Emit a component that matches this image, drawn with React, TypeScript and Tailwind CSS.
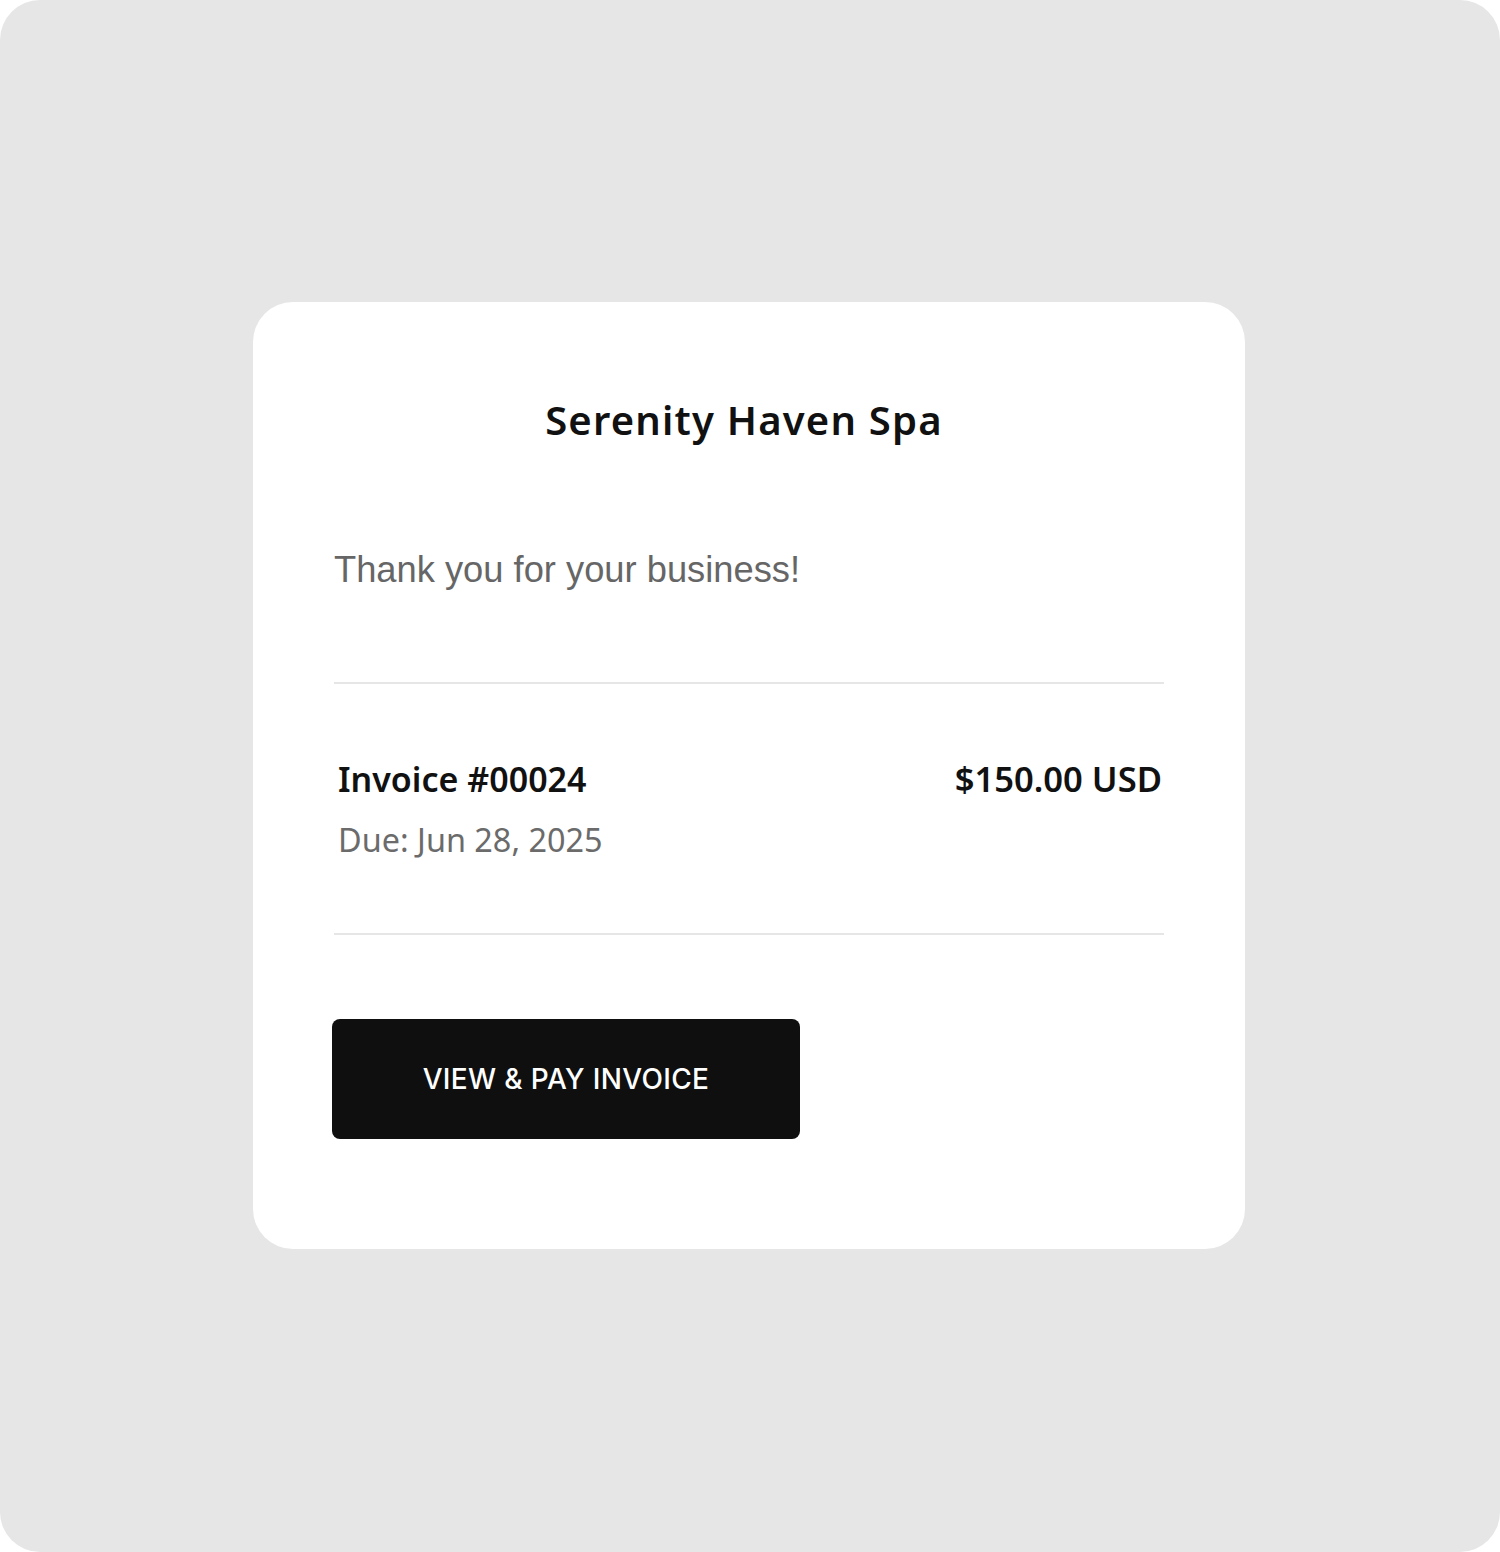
import React from "react";

export default function App() {
  return (
    <div className="w-[1500px] h-[1552px] bg-white">
      <div className="w-full h-full rounded-[40px] bg-[#e6e6e6] flex items-center justify-center pr-[2px] pb-[2px]">
        <div className="w-[992px] rounded-[40px] bg-white px-[81px] pt-[94px] pb-[110px] flex flex-col">
          <h1 className="text-center text-[40px] leading-[48px] font-semibold text-[#111111] tracking-[1.2px] pr-[10px] font-['Noto_Sans',sans-serif]">
            Serenity Haven Spa
          </h1>
          <p className="mt-[104px] text-[36.3px] leading-[44px] text-[#666666] font-['Liberation_Sans',Arial,sans-serif]">
            Thank you for your business!
          </p>
          <div className="mt-[90px] h-[2px] bg-[#e6e6e6]" />
          <div className="mt-[73px] flex justify-between pl-[4px] pr-[2px] font-['Noto_Sans',sans-serif]">
            <div className="flex flex-col">
              <span className="text-[34px] leading-[44px] font-semibold text-[#111111]">Invoice #00024</span>
              <span className="mt-[16px] text-[32.4px] leading-[44px] text-[#6b6b6b]">Due: Jun 28, 2025</span>
            </div>
            <span className="text-[34.6px] leading-[44px] font-semibold text-[#111111]">$150.00 USD</span>
          </div>
          <div className="mt-[72px] h-[2px] bg-[#e6e6e6]" />
          <button className="mt-[84px] -ml-[2px] w-[468px] h-[120px] rounded-[8px] bg-[#0f0f0f] text-white text-[28px] tracking-[0.35px] font-medium font-['Inter',sans-serif] flex items-center justify-center">
            VIEW &amp; PAY INVOICE
          </button>
        </div>
      </div>
    </div>
  );
}
